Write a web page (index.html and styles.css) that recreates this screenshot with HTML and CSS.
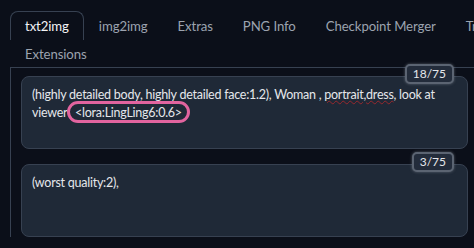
FILE: index.html
```html
<!DOCTYPE html>
<html lang="en">
<head>
    <meta charset="UTF-8">
    <meta name="viewport" content="width=device-width, initial-scale=1.0">
    <title>txt2img</title>
    <link rel="stylesheet" href="styles.css">
</head>
<body>
    <div class="tabs">
        <div class="tab-nav">
            <button class="tab selected">txt2img</button>
            <button class="tab">img2img</button>
            <button class="tab">Extras</button>
            <button class="tab">PNG Info</button>
            <button class="tab">Checkpoint Merger</button>
            <button class="tab">Train</button>
        </div>
        <div class="tab-nav">
            <button class="tab">Extensions</button>
        </div>
    </div>

    <div class="panel">
        <div class="prompt">
            <div class="token-counter">18/75</div>
            <div class="textarea">(highly detailed body, highly detailed face:1.2), Woman , <span class="misspelled">portrait,dress</span>, look at viewer <span class="lora">&lt;lora:LingLing6:0.6&gt;</span></div>
        </div>
        <div class="prompt">
            <div class="token-counter">3/75</div>
            <div class="textarea">(worst quality:2),</div>
        </div>
    </div>
</body>
</html>
```

FILE: styles.css
```css
body {
    margin: 0;
    background-color: #0b0f19;
    font-family: Lato, "Noto Sans", sans-serif;
    color: #e5e7eb;
    overflow: hidden;
}
.tabs {
    padding: 11px 0 0 10px;
}
.tab-nav {
    display: flex;
    white-space: nowrap;
    overflow: hidden;
}
.tab {
    flex-shrink: 0;
    height: 29px;
    padding: 0 14px;
    background: none;
    border: 1px solid transparent;
    border-bottom: none;
    border-radius: 8px 8px 0 0;
    font-family: inherit;
    font-size: 13.2px;
    letter-spacing: -0.1px;
    color: #9ca3af;
}
.tab.selected {
    border-color: #374151;
    color: #f3f4f6;
}
.tab-nav + .tab-nav .tab {
    height: 27px;
}
.panel {
    margin-left: 10px;
    border-top: 1px solid #374151;
    border-left: 1px solid #374151;
    padding: 8px 6px 0 10px;
    display: flex;
    flex-direction: column;
    gap: 15px;
}
.prompt {
    position: relative;
}
.textarea {
    height: 73px;
    box-sizing: border-box;
    padding: 9px 10px;
    background-color: #1f2937;
    border: 1px solid #374151;
    border-radius: 8px;
    font-size: 12.5px;
    letter-spacing: -0.25px;
    line-height: 18px;
}
.token-counter {
    position: absolute;
    top: -12px;
    right: 14px;
    padding: 0 6px;
    background-color: #232c3b;
    border: 2px solid #5b6472;
    border-radius: 5px;
    box-shadow: 0 0 3px rgba(156, 163, 175, 0.5);
    font-size: 12px;
    line-height: 16px;
}
.misspelled {
    text-decoration: underline wavy rgba(220, 38, 38, 0.6);
    text-decoration-thickness: 1px;
}
.lora {
    margin-left: -3px;
    padding: 1px 5px 0;
    border: 3px solid #e2649f;
    border-radius: 12px;
}
```
